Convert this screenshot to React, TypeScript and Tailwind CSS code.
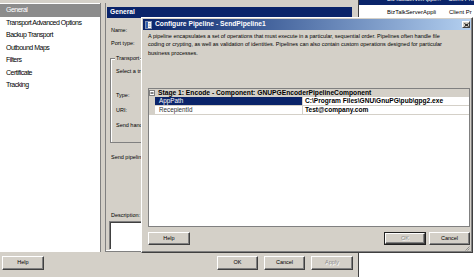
import React from 'react';

const face = 'bg-[#d4d0c8]';

type BtnProps = { label: string; w: string; disabled?: boolean; isDefault?: boolean };

const Btn: React.FC<BtnProps> = ({ label, w, disabled, isDefault }) => {
  const inner = (
    <div
      className={`${w} h-full ${face} border border-t-white border-l-white border-r-[#404040] border-b-[#404040] shadow-[inset_-1px_-1px_#808080] flex items-center justify-center text-[5.5px] leading-none ${
        disabled ? 'text-[#8a8a8a] [text-shadow:1px_1px_#ffffff]' : 'text-black'
      }`}
    >
      {label}
    </div>
  );
  if (isDefault) {
    return <div className="h-full border border-[#202020] flex">{inner}</div>;
  }
  return inner;
};

const listItems = ['Transport Advanced Options', 'Backup Transport', 'Outbound Maps', 'Filters', 'Certificate', 'Tracking'];

const App: React.FC = () => {
  return (
    <div className="relative w-[474px] h-[277px] overflow-hidden bg-white text-black font-['Liberation_Sans',Arial,sans-serif]">
      {/* window behind, top right */}
      <div className="absolute left-[358px] top-0 right-0 flex flex-col text-[5.9px]">
        <div className="-mt-[6px] h-[11px] bg-[#0a246a] text-white flex items-center whitespace-nowrap">
          <span className="ml-[29px] w-[62px]">BizTalkServerAppli...</span>
          <span>Client Pro</span>
        </div>
        <div className="h-[13px] pt-[1px] flex items-center whitespace-nowrap">
          <span className="ml-[29px] w-[62px]">BizTalkServerAppli</span>
          <span>Client Pr</span>
        </div>
      </div>

      {/* port properties window */}
      <div className={`absolute left-0 top-0 w-[359px] h-[277px] ${face} border-r border-[#404040] flex flex-col`}>
        <div className="flex h-[253px] pt-[3px]">
          <div className="w-[101px] h-[249px] bg-white border-r border-[#808080] pt-[1px] flex flex-col text-[7px] tracking-[-0.5px]">
            <div className="h-[12.5px] bg-[#8c8c8c] text-white flex items-center pl-[6px]">General</div>
            {listItems.map((t) => (
              <div key={t} className="h-[12.5px] flex items-center pl-[6px] whitespace-nowrap">
                {t}
              </div>
            ))}
          </div>

          <div className="ml-[4px] flex-1 h-[249px] border-l border-b border-[#808080] shadow-[inset_0_-1px_#ffffff] pt-[4px] pl-[1px] flex flex-col text-[5.5px]">
            <div className="h-[11px] mr-[6px] bg-[#0a246a] text-white font-bold text-[6.7px] flex items-center pl-[3px]">
              General
            </div>
            <div className="mt-[6px] h-[12px] flex items-center pl-[4px]">Name:</div>
            <div className="mt-[1px] h-[12px] flex items-center pl-[4px]">Port type:</div>

            <div className="mt-[9px] ml-[3px] mr-[6px] border border-[#808080] shadow-[inset_1px_1px_#ffffff] pl-[5px] pb-[11px] flex flex-col">
              <div className="-mt-[6px] -ml-[1px] h-[10px] flex items-center">
                <span className={`${face} px-[1px]`}>Transport</span>
              </div>
              <div className="mt-[2px] h-[12px] flex items-center whitespace-nowrap">Select a transport type and enter the address</div>
              <div className="mt-[12px] h-[12px] flex items-center">Type:</div>
              <div className="mt-[3px] h-[12px] flex items-center">URI:</div>
              <div className="mt-[3px] h-[12px] flex items-center">Send handler:</div>
            </div>

            <div className="mt-[8px] h-[12px] flex items-center pl-[4px]">Send pipeline:</div>
            <div className="mt-[46px] h-[12px] flex items-center pl-[4px]">Description:</div>
            <div className="ml-[2px] w-[60px] h-[29px] bg-white border border-t-[#808080] border-l-[#808080] border-r-white border-b-white shadow-[inset_1px_1px_#404040]" />
          </div>
        </div>

        <div className="h-[24px] pt-[3px] flex">
          <div className="h-[14px] ml-[2px] flex">
            <Btn label="Help" w="w-[42px]" />
          </div>
          <div className="h-[14px] ml-auto mr-[5px] flex gap-[6px]">
            <Btn label="OK" w="w-[41px]" />
            <Btn label="Cancel" w="w-[41px]" />
            <Btn label="Apply" w="w-[42px]" disabled />
          </div>
        </div>
      </div>

      {/* Configure Pipeline dialog */}
      <div
        className={`absolute left-[141px] top-[17px] w-[332px] h-[236px] ${face} border border-t-white border-l-white border-r-[#404040] border-b-[#404040] shadow-[inset_-1px_-1px_#808080] p-[1px] flex flex-col`}
      >
        <div className="h-[11px] shrink-0 bg-gradient-to-r from-[#0a246a] to-[#b4d0f0] flex items-center pl-[2px] pr-[1px]">
          <svg width="7" height="8" viewBox="0 0 7 8">
            <rect x="0.5" y="0.5" width="6" height="7" fill="#ffffff" stroke="#8090b0" />
            <rect x="1" y="1" width="2" height="6" fill="#3060b0" />
            <path d="M3.5 2.5h2M3.5 4h2M3.5 5.5h2" stroke="#909090" strokeWidth="0.6" />
          </svg>
          <span className="ml-[3px] text-white font-bold text-[6.7px] whitespace-nowrap">Configure Pipeline - SendPipeline1</span>
          <div className="ml-auto w-[8px] h-[7px] bg-[#d4d0c8] border-t border-l border-white border-r border-b border-r-[#404040] border-b-[#404040] flex items-center justify-center">
            <svg width="5" height="4" viewBox="0 0 5 4">
              <path d="M0.5 0.5L4.5 3.5M4.5 0.5L0.5 3.5" stroke="#000000" strokeWidth="1" />
            </svg>
          </div>
        </div>

        <div className="flex-1 pl-[5px] pr-[1px] flex flex-col">
          <div className="mt-[1.5px] text-[5.5px] leading-[8.5px] whitespace-nowrap">
            <div>A pipeline encapsulates a set of operations that must execute in a particular, sequential order. Pipelines often handle file</div>
            <div>coding or crypting, as well as validation of identities. Pipelines can also contain custom operations designed for particular</div>
            <div>business processes.</div>
          </div>

          <div className="mt-[31px] h-[139px] bg-white border border-[#808080] flex flex-col">
            <div className={`h-[8px] ${face} flex items-center`}>
              <svg width="6" height="6" viewBox="0 0 6 6">
                <rect x="0.5" y="0.5" width="5" height="5" fill="#ffffff" stroke="#808080" />
                <path d="M1.5 3h3" stroke="#000000" strokeWidth="1" />
              </svg>
              <span className="ml-[3px] font-bold text-[6.7px] whitespace-nowrap">Stage 1: Encode - Component: GNUPGEncoderPipelineComponent</span>
            </div>
            <div className="h-[9px] flex border-b border-[#d4d0c8]">
              <div className={`w-[6px] ${face}`} />
              <div className="w-[148px] bg-[#0a246a] text-white text-[6.3px] flex items-center pl-[4px] border-r border-[#d4d0c8]">AppPath</div>
              <div className="flex-1 pl-[2px] flex items-center font-bold text-[6.6px] whitespace-nowrap">C:\Program Files\GNU\GnuPG\pub\gpg2.exe</div>
            </div>
            <div className="h-[9px] flex border-b border-[#d4d0c8]">
              <div className={`w-[6px] ${face}`} />
              <div className="w-[148px] text-[#303030] text-[6.3px] flex items-center pl-[4px] border-r border-[#d4d0c8]">RecepientId</div>
              <div className="flex-1 pl-[2px] flex items-center font-bold text-[6.6px] whitespace-nowrap">Test@company.com</div>
            </div>
          </div>

          <div className="mt-[5px] h-[13px] flex">
            <Btn label="Help" w="w-[42px]" />
            <div className="ml-auto flex gap-[3px]">
              <Btn label="OK" w="w-[40px]" disabled isDefault />
              <Btn label="Cancel" w="w-[41px]" />
            </div>
          </div>
          <div className="mt-auto flex justify-end">
            <svg width="5" height="5" viewBox="0 0 5 5">
              <path d="M4.5 0.5L0.5 4.5M4.5 2.5L2.5 4.5" stroke="#808080" strokeWidth="0.8" />
            </svg>
          </div>
        </div>
      </div>
    </div>
  );
};

export default App;
